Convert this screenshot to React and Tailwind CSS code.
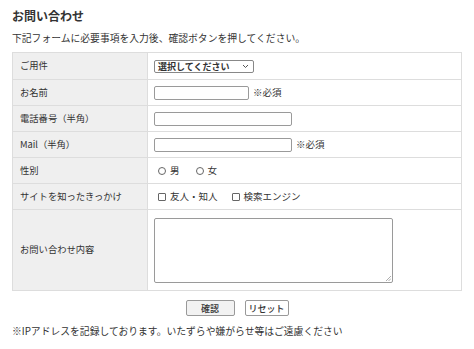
import React from 'react';

const font = { fontFamily: '"Noto Sans CJK JP", "Noto Sans", sans-serif' };

function Row({ label, children, tall }) {
  return (
    <div className={`flex border-t border-[#dddddd] first:border-t-0 ${tall ? 'h-[81px]' : 'h-[26px]'}`}>
      <div className="w-[135px] shrink-0 bg-[#efefef] border-r border-[#dddddd] flex items-center pl-[7px] text-[9.3px] text-[#333]">
        {label}
      </div>
      <div className="flex-1 flex items-center pl-[6px] text-[9.5px] text-[#333]">{children}</div>
    </div>
  );
}

function Input({ w }) {
  return <div className={`${w} h-[14px] border border-[#9a9a9a] rounded-[2px] bg-white`} />;
}

export default function App() {
  return (
    <div className="w-[474px] h-[349px] bg-white px-[12px] pt-[8px] text-[#333]" style={font}>
      <h1 className="text-[12px] font-bold leading-[16px]">お問い合わせ</h1>
      <p className="text-[9.8px] mt-[7px] leading-[14px]">下記フォームに必要事項を入力後、確認ボタンを押してください。</p>
      <div className="mt-[7px] w-[450px] border border-[#dddddd]">
        <Row label="ご用件">
          <div className="w-[100px] h-[13px] border border-[#888] rounded-[2px] flex items-center justify-between pl-[3px] pr-[4px] text-[9px] font-bold leading-none">
            <span>選択してください</span>
            <svg width="7" height="5" viewBox="0 0 7 5"><path d="M1 1l2.5 2.5L6 1" fill="none" stroke="#555" strokeWidth="1" /></svg>
          </div>
        </Row>
        <Row label="お名前">
          <Input w="w-[95px]" />
          <span className="ml-[4px]">※必須</span>
        </Row>
        <Row label="電話番号（半角）">
          <Input w="w-[138px]" />
        </Row>
        <Row label="Mail（半角）">
          <Input w="w-[138px]" />
          <span className="ml-[4px]">※必須</span>
        </Row>
        <Row label="性別">
          <div className="flex items-center gap-[4px] ml-[4px]">
            <span className="w-[8px] h-[8px] rounded-full border border-[#666]" />
            <span>男</span>
          </div>
          <div className="flex items-center gap-[4px] ml-[16px]">
            <span className="w-[8px] h-[8px] rounded-full border border-[#666]" />
            <span>女</span>
          </div>
        </Row>
        <Row label="サイトを知ったきっかけ">
          <div className="flex items-center gap-[4px] ml-[4px]">
            <span className="w-[8px] h-[8px] rounded-[1px] border border-[#666]" />
            <span>友人・知人</span>
          </div>
          <div className="flex items-center gap-[4px] ml-[14px]">
            <span className="w-[8px] h-[8px] rounded-[1px] border border-[#666]" />
            <span>検索エンジン</span>
          </div>
        </Row>
        <Row label="お問い合わせ内容" tall>
          <div className="w-[239px] h-[65px] border border-[#9a9a9a] rounded-[2px] relative">
            <svg className="absolute right-[1px] bottom-[1px]" width="5" height="5" viewBox="0 0 5 5"><path d="M5 0L0 5M5 2.5L2.5 5" stroke="#999" strokeWidth="0.8" /></svg>
          </div>
        </Row>
      </div>
      <div className="flex justify-center gap-[10px] mt-[9px]">
        <button className="w-[49px] h-[16px] border border-[#999] rounded-[2px] bg-[#f2f2f2] text-[9px] font-medium leading-none">確認</button>
        <button className="w-[44px] h-[16px] border border-[#999] rounded-[2px] bg-white text-[9px] font-medium leading-none">リセット</button>
      </div>
      <p className="text-[9.8px] mt-[8px] leading-[14px]">※IPアドレスを記録しております。いたずらや嫌がらせ等はご遠慮ください</p>
    </div>
  );
}
